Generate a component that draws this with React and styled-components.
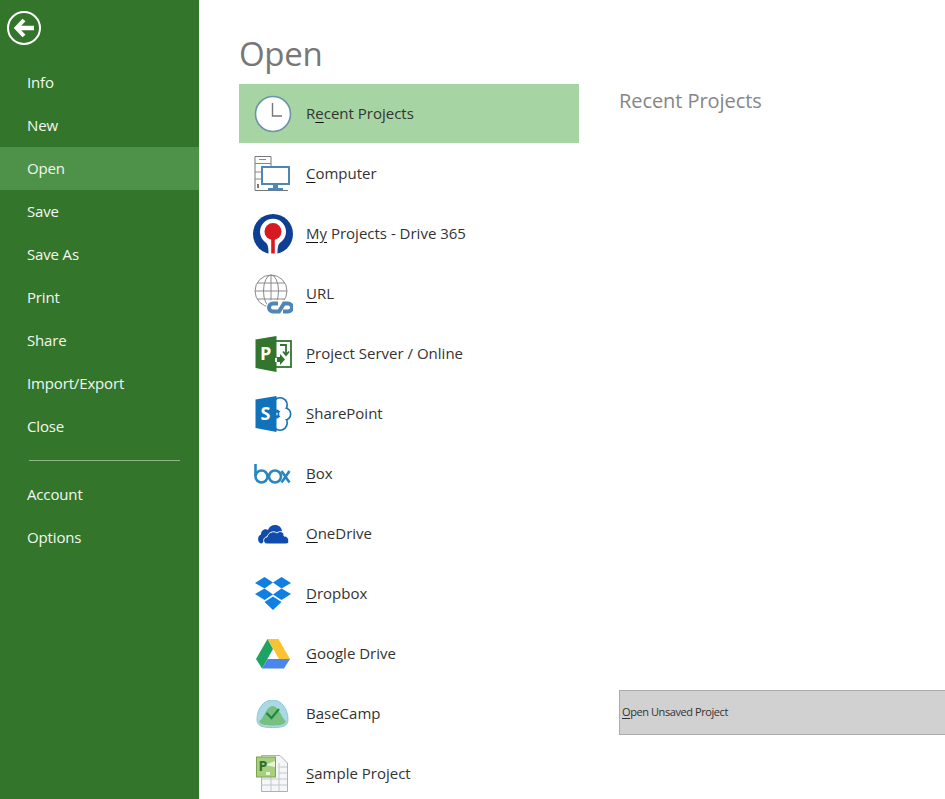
import React from "react";
import styled, { createGlobalStyle } from "styled-components";

const GlobalStyle = createGlobalStyle`
  html, body {
    margin: 0;
    padding: 0;
    height: 100%;
    overflow: hidden;
    background: #fff;
    font-family: "Open Sans", "Noto Sans", "Liberation Sans", sans-serif;
  }
`;

const Page = styled.div`
  display: flex;
  width: 945px;
  height: 799px;
  overflow: hidden;
`;

const Sidebar = styled.nav`
  display: flex;
  flex-direction: column;
  flex: 0 0 199px;
  background-color: #33752b;
  color: #fff;
`;

const BackButton = styled.div`
  display: flex;
  padding: 11px 0 0 7px;
  height: 50px;
`;

const NavItem = styled.div`
  display: flex;
  align-items: center;
  box-sizing: border-box;
  height: 43px;
  padding: 0 0 1px 27px;
  font-size: 15px;
  letter-spacing: -0.15px;
  color: #f3f8f1;
  background-color: ${props => (props.$active ? "#4d9248" : "transparent")};
`;

const NavRule = styled.hr`
  width: 151px;
  margin: 12px 0 12px 29px;
  border: 0;
  border-top: 1px solid #8fb78a;
`;

const Main = styled.main`
  display: flex;
  flex: 1;
  padding-left: 40px;
  min-width: 0;
`;

const LeftColumn = styled.section`
  flex: 0 0 340px;
`;

const Title = styled.h1`
  margin: 0;
  height: 83px;
  padding-top: 31px;
  box-sizing: border-box;
  font-size: 33px;
  line-height: 46px;
  font-weight: 400;
  letter-spacing: -0.3px;
  color: #777;
`;

const PlaceList = styled.ul`
  list-style: none;
  margin: 0;
  padding: 0;
`;

const PlaceRow = styled.li`
  display: flex;
  align-items: center;
  box-sizing: border-box;
  height: 60px;
  border-top: 1px solid transparent;
  background-clip: padding-box;
  background-color: ${props => (props.$active ? "#a6d4a2" : "transparent")};
`;

const IconSlot = styled.div`
  display: flex;
  align-items: center;
  justify-content: center;
  flex: 0 0 67px;
  height: 59px;
`;

const PlaceLabel = styled.span`
  padding-bottom: 2px;
  font-size: 15px;
  letter-spacing: 0;
  color: #333;

  u {
    text-decoration-color: #111;
    text-underline-offset: 3px;
  }
`;

const RightColumn = styled.section`
  display: flex;
  flex-direction: column;
  flex: 1;
  margin-left: 40px;
  min-width: 0;
`;

const SectionTitle = styled.h2`
  margin: 86px 0 0;
  height: 604px;
  font-size: 20px;
  line-height: 30px;
  font-weight: 400;
  letter-spacing: -0.07px;
  color: #868686;
`;

const UnsavedButton = styled.div`
  display: flex;
  align-items: center;
  box-sizing: border-box;
  height: 45px;
  padding: 0 0 2px 2px;
  background-color: #d1d1d1;
  border: 1px solid #ababab;
  border-right: 0;
  font-size: 11px;
  letter-spacing: -0.42px;
  color: #333;

  u {
    text-underline-offset: 2px;
  }
`;

const BackIcon = () => (
  <svg width="36" height="36" viewBox="0 0 36 36">
    <circle cx="17" cy="17" r="16" fill="none" stroke="#fff" strokeWidth="2" />
    <path d="M17 9 L9.5 17 L17 25" fill="none" stroke="#fff" strokeWidth="4" />
    <path d="M11 17 H27" stroke="#fff" strokeWidth="4.5" />
  </svg>
);

const ClockIcon = () => (
  <svg width="38" height="38" viewBox="0 0 38 38">
    <circle cx="19" cy="19" r="17.5" fill="#fff" stroke="#6b93ad" strokeWidth="1.6" />
    <path d="M18.5 8 V21 H28" fill="none" stroke="#777" strokeWidth="1.4" />
  </svg>
);

const ComputerIcon = () => (
  <svg width="38" height="36" viewBox="0 0 38 36">
    <path d="M1 .5 H17 V12 M1 .5 V34.5 H34" fill="none" stroke="#777" strokeWidth="1" />
    <path d="M1 7.5 H17 M5 3.5 H12 M1 16 H7 M1 23 H7" stroke="#888" strokeWidth="1" />
    <rect x="3" y="28" width="2" height="4" fill="#777" />
    <rect x="8" y="11" width="27" height="17" fill="#fff" stroke="#4f86b5" strokeWidth="2" />
    <path d="M19 28 H24 V32 H29 V34.5 H14 V32 H19 Z" fill="#4f86b5" />
  </svg>
);

const DriveIcon = () => (
  <svg width="40" height="40" viewBox="0 0 40 40">
    <circle cx="20" cy="20" r="20" fill="#0f3f94" />
    <path d="M15.5 40 C15.5 33 15 30 12 28 A13 13 0 1 1 28 28 C25 30 24.5 33 24.5 40 Z" fill="#fff" />
    <circle cx="20" cy="17.5" r="8.5" fill="#d71a21" />
    <rect x="18.2" y="22" width="3.6" height="17.5" fill="#d71a21" />
  </svg>
);

const UrlIcon = () => (
  <svg width="40" height="41" viewBox="0 0 40 41">
    <g fill="none" stroke="#8a8a8a" strokeWidth="1">
      <circle cx="18" cy="18" r="16" />
      <ellipse cx="18" cy="18" rx="7.5" ry="16" />
      <path d="M2 18 H34 M4 10 H32 M4 26 H32 M18 2 V34" />
    </g>
    <rect x="13" y="27" width="27" height="14" rx="7" fill="#fff" />
    <g fill="none" stroke="#4f86b5" strokeWidth="4">
      <path d="M25 30.5 H20 A3.8 3.8 0 0 0 20 38.5 H26 L31 30.5 H35 A3.8 3.8 0 0 1 35 38.5 H30" />
    </g>
  </svg>
);

const ProjectIcon = () => (
  <svg width="38" height="38" viewBox="0 0 38 38">
    <rect x="20" y="6" width="17" height="26" fill="#fff" stroke="#31752f" strokeWidth="1.8" />
    <path d="M26 10 H32 V19 M29 16.5 L32 20 L35 16.5" fill="none" stroke="#31752f" strokeWidth="1.8" />
    <path d="M1.5 4.5 L22.5 1 V37 L1.5 33 Z" fill="#31752f" />
    <path d="M22.5 22 H26 V19 L31 24.5 L26 30 V27 H22.5 Z" fill="#31752f" />
    <path d="M21 23 H23 V27 H21 Z" fill="#fff" />
    <text x="6" y="25" fontFamily="'Open Sans', sans-serif" fontSize="18" fontWeight="700" fill="#fff">P</text>
  </svg>
);

const SharePointIcon = () => (
  <svg width="38" height="38" viewBox="0 0 38 38">
    <g fill="#0f72ba">
      <circle cx="26" cy="10" r="8" />
      <circle cx="30.5" cy="19" r="7" />
      <circle cx="26" cy="28" r="8" />
    </g>
    <g fill="#fff">
      <circle cx="26" cy="10" r="6.4" />
      <circle cx="30.5" cy="19" r="5.4" />
      <circle cx="26" cy="28" r="6.4" />
    </g>
    <path d="M22.5 14 L26.5 16.5 L22.5 18 Z M22.5 20 L26.5 21.5 L22.5 24 Z" fill="#0f72ba" />
    <path d="M1.5 4.5 L22.5 1 V37 L1.5 33 Z" fill="#0f72ba" />
    <text x="6.5" y="25" fontFamily="'Open Sans', sans-serif" fontSize="18" fontWeight="700" fill="#fff">S</text>
  </svg>
);

const BoxIcon = () => (
  <svg width="37" height="20" viewBox="0 0 37 20">
    <g fill="none" stroke="#2a86c0" strokeWidth="2.6">
      <path d="M1.5 0 V12" />
      <circle cx="7.5" cy="12.5" r="6" />
      <circle cx="21" cy="12.5" r="6" />
      <path d="M27.5 7 L35.5 18.5 M35.5 7 L27.5 18.5" />
    </g>
  </svg>
);

const OneDriveIcon = () => (
  <svg width="34" height="21" viewBox="0 0 34 21">
    <path d="M6 20.5 C1 20.5 1 12.5 5 11.5 C5 6.5 10 5 12 7 C14 0.5 24 0 26 7.5 L20 15 H10 Z" fill="#0f4cad" />
    <path d="M11 21 C6.5 21 6.5 14 11 14 C12 10 17 7 21 10 C24 7 28.5 9 28 13 C33.5 13 34.5 21 30 21 Z" fill="#0f4cad" stroke="#fff" strokeWidth="1" />
  </svg>
);

const DropboxIcon = () => (
  <svg width="36" height="34" viewBox="0 0 36 34">
    <g fill="#0f7fe3">
      <path d="M9.5 0 L18 5.5 L9.5 11.5 L0 6 Z" />
      <path d="M26.5 0 L36 6 L26.5 11.5 L18 5.5 Z" />
      <path d="M9.5 11.5 L18 17.5 L9.5 23 L0 17 Z" />
      <path d="M26.5 11.5 L36 17 L26.5 23 L18 17.5 Z" />
      <path d="M18 19.5 L26.5 25 L18 33 L9.5 25 Z" />
    </g>
  </svg>
);

const GoogleDriveIcon = () => (
  <svg width="34" height="30" viewBox="0 0 34 30">
    <path d="M11.5 0 H22.5 L34 20 H23 Z" fill="#fbc32f" />
    <path d="M11.5 0 L17 10 L6 29.5 L0 20 Z" fill="#1ea362" />
    <path d="M11.5 20 H34 L28 29.5 H6 Z" fill="#4b86ec" />
  </svg>
);

const BaseCampIcon = () => (
  <svg width="33" height="28" viewBox="0 0 33 28">
    <path d="M1 20 C1 8 8 0 16.5 0 C25 0 32 8 32 20 C32 27 24 27.5 16.5 27.5 C9 27.5 1 27 1 20 Z" fill="#a9d9e4" stroke="#8cc6d0" />
    <path d="M3 21 C7 21 10 6 16.5 6 C23 6 26 19 30 21 C29 25 23 25.5 16.5 25.5 C10 25.5 4 25 3 21 Z" fill="#79bf80" />
    <path d="M10.5 13 L15.5 18 L23 9" fill="none" stroke="#1e8a43" strokeWidth="2.2" />
  </svg>
);

const SampleIcon = () => (
  <svg width="34" height="37" viewBox="0 0 34 37">
    <path d="M5.5 .5 H24 L31.5 8 V36.5 H5.5 Z" fill="#f4f6f8" stroke="#aab2ba" />
    <path d="M5.5 24 H31 M5.5 30 H31 M15 22 V36 M23 8 V36 M23 12 H31 M23 18 H31" stroke="#c2c8ce" />
    <rect x=".5" y="2" width="19" height="20" fill="#a8cf7a" stroke="#7aa653" />
    <path d="M9 10 L19 6 V12 Z M10 17 H14 V20 H10 Z" fill="#e8f3d8" />
    <text x="2.5" y="16" fontFamily="'Open Sans', sans-serif" fontSize="14" fontWeight="700" fill="#2f6e2f">P</text>
  </svg>
);

const navTop = ["Info", "New", "Open", "Save", "Save As", "Print", "Share", "Import/Export", "Close"];
const navBottom = ["Account", "Options"];

// key = the letter underlined as the access key, given by its position in the label
const places = [
  { name: "Recent Projects", key: 1, Icon: ClockIcon, active: true },
  { name: "Computer", key: 0, Icon: ComputerIcon },
  { name: "My Projects - Drive 365", key: [0, 2], Icon: DriveIcon },
  { name: "URL", key: 0, Icon: UrlIcon },
  { name: "Project Server / Online", key: 0, Icon: ProjectIcon },
  { name: "SharePoint", key: 0, Icon: SharePointIcon },
  { name: "Box", key: 0, Icon: BoxIcon },
  { name: "OneDrive", key: 0, Icon: OneDriveIcon },
  { name: "Dropbox", key: 0, Icon: DropboxIcon },
  { name: "Google Drive", key: 0, Icon: GoogleDriveIcon },
  { name: "BaseCamp", key: 1, Icon: BaseCampIcon },
  { name: "Sample Project", key: 0, Icon: SampleIcon }
];

const AccessLabel = ({ name, at }) => {
  const [start, end] = Array.isArray(at) ? at : [at, at + 1];
  return (
    <>
      {name.slice(0, start)}
      <u>{name.slice(start, end)}</u>
      {name.slice(end)}
    </>
  );
};

export default function App() {
  return (
    <Page>
      <GlobalStyle />
      <Sidebar>
        <BackButton>
          <BackIcon />
        </BackButton>
        {navTop.map(item => (
          <NavItem key={item} $active={item === "Open"}>
            {item}
          </NavItem>
        ))}
        <NavRule />
        {navBottom.map(item => (
          <NavItem key={item}>{item}</NavItem>
        ))}
      </Sidebar>
      <Main>
        <LeftColumn>
          <Title>Open</Title>
          <PlaceList>
            {places.map(({ name, key, Icon, active }) => (
              <PlaceRow key={name} $active={active}>
                <IconSlot>
                  <Icon />
                </IconSlot>
                <PlaceLabel>
                  <AccessLabel name={name} at={key} />
                </PlaceLabel>
              </PlaceRow>
            ))}
          </PlaceList>
        </LeftColumn>
        <RightColumn>
          <SectionTitle>Recent Projects</SectionTitle>
          <UnsavedButton>
            <span>
              <AccessLabel name="Open Unsaved Project" at={0} />
            </span>
          </UnsavedButton>
        </RightColumn>
      </Main>
    </Page>
  );
}
